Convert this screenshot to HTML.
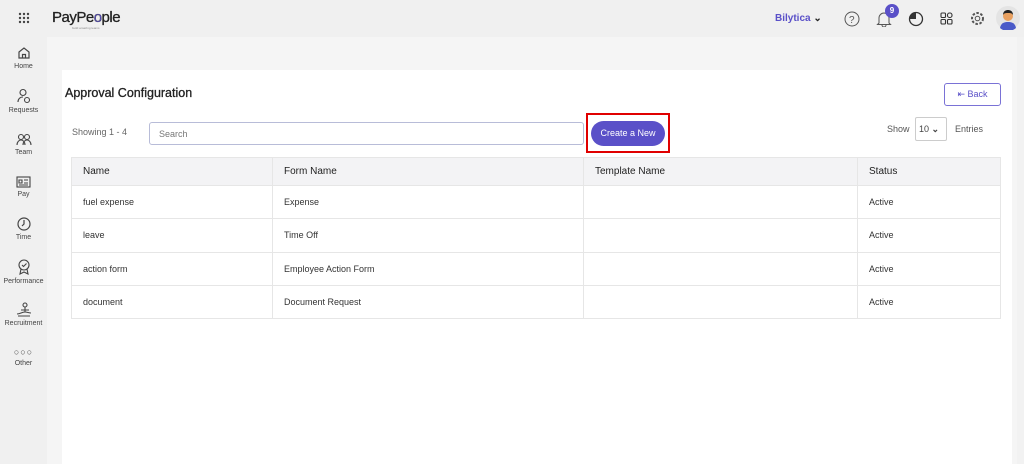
<!DOCTYPE html>
<html><head><style>
*{box-sizing:border-box;margin:0;padding:0}
body{width:1024px;height:464px;overflow:hidden;background:#f2f2f2;font-family:"Liberation Sans",sans-serif;position:relative;color:#333}
.top{position:absolute;left:0;top:0;width:1024px;height:37px;background:#f0f0f0}
.side{position:absolute;left:0;top:37px;width:47px;height:427px;background:#f0f0f0}
.main{position:absolute;left:47px;top:37px;width:970px;height:427px;background:#f5f5f5}
.card{position:absolute;left:62px;top:70px;width:950px;height:394px;background:#fff}
.nav{position:absolute;width:47px;text-align:center;font-size:7px;color:#444}
.nav svg{display:block;margin:0 auto 3px}
table{position:absolute;left:71px;top:157px;width:930px;border-collapse:collapse;font-size:9px;color:#333}
td,th{border:1px solid #e6e6e6;text-align:left;padding-left:11px;font-weight:normal}
th{background:#f3f3f5;height:28px;font-size:10px;color:#222}
td{height:33.3px}
.abs{position:absolute}
</style></head><body>
<div class="top"></div>
<div class="side"></div>
<div class="main"></div>
<div class="card"></div>
<svg class="abs" style="left:18px;top:12px" width="12" height="12"><g fill="#444"><circle cx="2" cy="2" r="1.2"/><circle cx="6" cy="2" r="1.2"/><circle cx="10" cy="2" r="1.2"/><circle cx="2" cy="6" r="1.2"/><circle cx="6" cy="6" r="1.2"/><circle cx="10" cy="6" r="1.2"/><circle cx="2" cy="10" r="1.2"/><circle cx="6" cy="10" r="1.2"/><circle cx="10" cy="10" r="1.2"/></g></svg>
<div class="abs" style="left:52px;top:9px;font-size:15px;color:#222;letter-spacing:-0.5px;-webkit-text-stroke:0.3px #222">PayPe<span style="color:#5a50c8">o</span>ple</div>
<div class="abs" style="left:72px;top:26px;font-size:3px;color:#888">build amazing teams</div>
<div class="nav" style="top:46px"><svg width="14" height="14" viewBox="0 0 14 14" fill="none" stroke="#444" stroke-width="1.2"><path d="M2 6l5-4 5 4v6H2z M5.5 12V8.5h3V12"/></svg>Home</div>
<div class="nav" style="top:88px"><svg width="14" height="16" viewBox="0 0 14 16" fill="none" stroke="#444" stroke-width="1.1"><circle cx="6" cy="4.5" r="3"/><path d="M1 14c0-3 2-5 5-5"/><circle cx="10" cy="12" r="2.5"/></svg>Requests</div>
<div class="nav" style="top:133px"><svg width="16" height="13" viewBox="0 0 16 13" fill="none" stroke="#444" stroke-width="1.1"><circle cx="5" cy="4" r="2.5"/><circle cx="11" cy="4" r="2.5"/><path d="M1 12c0-3 2-5 4-5s4 2 4 5M7 12c0-3 2-5 4-5s4 2 4 5"/></svg>Team</div>
<div class="nav" style="top:176px"><svg width="15" height="12" viewBox="0 0 15 12" fill="none" stroke="#444" stroke-width="1.1"><rect x="1" y="1" width="13" height="10"/><path d="M3 4h3v3H3zM8 4h4M8 7h4M3 9h9"/></svg>Pay</div>
<div class="nav" style="top:217px"><svg width="14" height="14" viewBox="0 0 14 14" fill="none" stroke="#444" stroke-width="1.2"><circle cx="7" cy="7" r="6"/><path d="M7 3v4l-2 2"/></svg>Time</div>
<div class="nav" style="top:259px"><svg width="14" height="16" viewBox="0 0 14 16" fill="none" stroke="#444" stroke-width="1.1"><circle cx="7" cy="6" r="5"/><path d="M5 6l1.5 1.5L9.5 4.5M4 10l-1 5 4-2 4 2-1-5"/></svg>Performance</div>
<div class="nav" style="top:302px"><svg width="16" height="15" viewBox="0 0 16 15" fill="none" stroke="#444" stroke-width="1.1"><circle cx="9" cy="3" r="2"/><path d="M9 5v5M5 8h8M1 12c3 0 5-2 8-2 2 0 4 1 6 1M2 14h12"/></svg>Recruitment</div>
<div class="nav" style="top:347px"><div style="font-size:9px;letter-spacing:1px;margin-bottom:3px">○○○</div>Other</div>
<div class="abs" style="left:775px;top:13px;font-size:10px;font-weight:bold;color:#5a50c8">Bilytica <span style="color:#222">⌄</span></div>
<svg class="abs" style="left:844px;top:11px" width="16" height="16"><circle cx="8" cy="8" r="7" fill="none" stroke="#555" stroke-width="1"/><text x="5" y="12" font-size="10" fill="#555" font-family="Liberation Sans">?</text></svg>
<svg class="abs" style="left:876px;top:10px" width="16" height="17"><path d="M3 13V8a5 5 0 0110 0v5l1.5 1.5h-13z M6 15a2 2 0 004 0" fill="none" stroke="#555" stroke-width="1"/></svg>
<div class="abs" style="left:885px;top:4px;width:14px;height:14px;border-radius:7px;background:#5a50c8;color:#fff;font-size:8px;font-weight:bold;text-align:center;line-height:14px">9</div>
<svg class="abs" style="left:908px;top:11px" width="16" height="16"><circle cx="8" cy="8" r="6.5" fill="none" stroke="#333" stroke-width="1.3"/><path d="M8 8V1.5A6.5 6.5 0 001.5 8z" fill="#333"/></svg>
<svg class="abs" style="left:940px;top:12px" width="13" height="13" fill="none" stroke="#333" stroke-width="1.1"><rect x="1" y="1" width="4.5" height="4.5" rx="1"/><rect x="7.5" y="1" width="4.5" height="4.5" rx="2"/><rect x="1" y="7.5" width="4.5" height="4.5" rx="1"/><rect x="7.5" y="7.5" width="4.5" height="4.5" rx="1"/></svg>
<svg class="abs" style="left:970px;top:11px" width="15" height="15"><circle cx="7.5" cy="7.5" r="2.3" fill="none" stroke="#555"/><circle cx="7.5" cy="7.5" r="5.5" fill="none" stroke="#555" stroke-dasharray="2.5 1.6" stroke-width="2"/></svg>
<svg class="abs" style="left:996px;top:6px" width="24" height="24"><circle cx="12" cy="12" r="12" fill="#e4e4e4"/><path d="M4 22c1-5 4-6 8-6s7 1 8 6a12 12 0 01-16 0z" fill="#4a5ac8"/><circle cx="12" cy="10" r="5" fill="#e8a060"/><path d="M7 9c0-4 3-5 5-5s5 1 5 5c-1-2-3-2-5-2s-4 0-5 2z" fill="#222"/></svg>
<div class="abs" style="left:65px;top:86px;font-size:12.5px;color:#222;-webkit-text-stroke:0.3px #222">Approval Configuration</div>
<div class="abs" style="left:944px;top:83px;width:57px;height:23px;border:1px solid #7a72d6;border-radius:3px;font-size:9px;color:#5a50c8;text-align:center;line-height:21px">⇤ Back</div>
<div class="abs" style="left:72px;top:127px;font-size:9px;color:#666">Showing 1 - 4</div>
<div class="abs" style="left:149px;top:122px;width:435px;height:23px;border:1px solid #b8bcd8;border-radius:3px;font-size:9px;color:#777;padding:6px 0 0 9px">Search</div>
<div class="abs" style="left:586px;top:113px;width:84px;height:40px;border:2px solid #e00000"></div>
<div class="abs" style="left:591px;top:121px;width:74px;height:25px;border-radius:13px;background:#5a50c8;color:#fff;font-size:9px;text-align:center;line-height:25px">Create a New</div>
<div class="abs" style="left:887px;top:124px;font-size:9px;color:#555">Show</div>
<div class="abs" style="left:915px;top:117px;width:32px;height:24px;border:1px solid #ccc;border-radius:2px;font-size:9px;color:#444;padding:6px 0 0 3px">10 <b>⌄</b></div>
<div class="abs" style="left:955px;top:124px;font-size:9px;color:#555">Entries</div>
<table>
<tr><th style="width:201px">Name</th><th style="width:311px">Form Name</th><th style="width:274px">Template Name</th><th>Status</th></tr>
<tr><td>fuel expense</td><td>Expense</td><td></td><td>Active</td></tr>
<tr><td>leave</td><td>Time Off</td><td></td><td>Active</td></tr>
<tr><td>action form</td><td>Employee Action Form</td><td></td><td>Active</td></tr>
<tr><td>document</td><td>Document Request</td><td></td><td>Active</td></tr>
</table>
</body></html>
